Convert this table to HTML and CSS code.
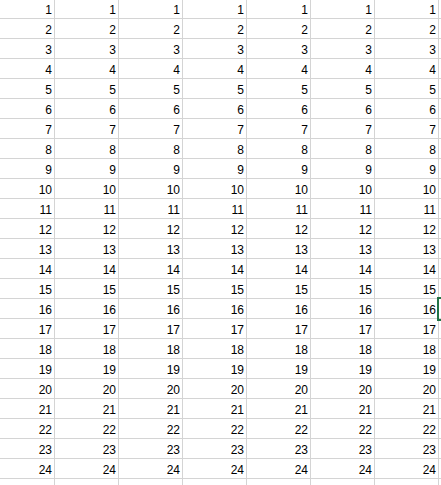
FILE: index.html
```html
<!DOCTYPE html>
<html>
<head>
<meta charset="utf-8">
<link rel="stylesheet" href="styles.css">
</head>
<body>
<div class="viewport">
<table class="sheet">
<tbody id="rows">
<tr><td>1</td><td>1</td><td>1</td><td>1</td><td>1</td><td>1</td><td>1</td><td></td></tr>
<tr><td>2</td><td>2</td><td>2</td><td>2</td><td>2</td><td>2</td><td>2</td><td></td></tr>
<tr><td>3</td><td>3</td><td>3</td><td>3</td><td>3</td><td>3</td><td>3</td><td></td></tr>
<tr><td>4</td><td>4</td><td>4</td><td>4</td><td>4</td><td>4</td><td>4</td><td></td></tr>
<tr><td>5</td><td>5</td><td>5</td><td>5</td><td>5</td><td>5</td><td>5</td><td></td></tr>
<tr><td>6</td><td>6</td><td>6</td><td>6</td><td>6</td><td>6</td><td>6</td><td></td></tr>
<tr><td>7</td><td>7</td><td>7</td><td>7</td><td>7</td><td>7</td><td>7</td><td></td></tr>
<tr><td>8</td><td>8</td><td>8</td><td>8</td><td>8</td><td>8</td><td>8</td><td></td></tr>
<tr><td>9</td><td>9</td><td>9</td><td>9</td><td>9</td><td>9</td><td>9</td><td></td></tr>
<tr><td>10</td><td>10</td><td>10</td><td>10</td><td>10</td><td>10</td><td>10</td><td></td></tr>
<tr><td>11</td><td>11</td><td>11</td><td>11</td><td>11</td><td>11</td><td>11</td><td></td></tr>
<tr><td>12</td><td>12</td><td>12</td><td>12</td><td>12</td><td>12</td><td>12</td><td></td></tr>
<tr><td>13</td><td>13</td><td>13</td><td>13</td><td>13</td><td>13</td><td>13</td><td></td></tr>
<tr><td>14</td><td>14</td><td>14</td><td>14</td><td>14</td><td>14</td><td>14</td><td></td></tr>
<tr><td>15</td><td>15</td><td>15</td><td>15</td><td>15</td><td>15</td><td>15</td><td></td></tr>
<tr><td>16</td><td>16</td><td>16</td><td>16</td><td>16</td><td>16</td><td>16</td><td class="selected"></td></tr>
<tr><td>17</td><td>17</td><td>17</td><td>17</td><td>17</td><td>17</td><td>17</td><td></td></tr>
<tr><td>18</td><td>18</td><td>18</td><td>18</td><td>18</td><td>18</td><td>18</td><td></td></tr>
<tr><td>19</td><td>19</td><td>19</td><td>19</td><td>19</td><td>19</td><td>19</td><td></td></tr>
<tr><td>20</td><td>20</td><td>20</td><td>20</td><td>20</td><td>20</td><td>20</td><td></td></tr>
<tr><td>21</td><td>21</td><td>21</td><td>21</td><td>21</td><td>21</td><td>21</td><td></td></tr>
<tr><td>22</td><td>22</td><td>22</td><td>22</td><td>22</td><td>22</td><td>22</td><td></td></tr>
<tr><td>23</td><td>23</td><td>23</td><td>23</td><td>23</td><td>23</td><td>23</td><td></td></tr>
<tr><td>24</td><td>24</td><td>24</td><td>24</td><td>24</td><td>24</td><td>24</td><td></td></tr>
<tr><td></td><td></td><td></td><td></td><td></td><td></td><td></td><td></td></tr>
</tbody>
</table>
</div>
</body>
</html>
```
FILE: styles.css
```css
html, body {
  margin: 0;
  padding: 0;
  background: #ffffff;
}

.viewport {
  width: 441px;
  height: 485px;
  overflow: hidden;
}

.sheet {
  margin: -1px 0 0 -9px;
  border-collapse: separate;
  border-spacing: 0;
  table-layout: fixed;
  width: 512px;
  font-family: "Liberation Sans", Arial, sans-serif;
  font-size: 12px;
  color: #000000;
}

.sheet td {
  box-sizing: border-box;
  width: 64px;
  height: 20px;
  padding: 0 2px 0 0;
  border-right: 1px solid #d4d4d4;
  border-bottom: 1px solid #d4d4d4;
  text-align: right;
  vertical-align: bottom;
  line-height: 15px;
  white-space: nowrap;
  overflow: visible;
}

.sheet td.selected {
  outline: 2px solid #217346;
  outline-offset: 0;
  position: relative;
}
```
